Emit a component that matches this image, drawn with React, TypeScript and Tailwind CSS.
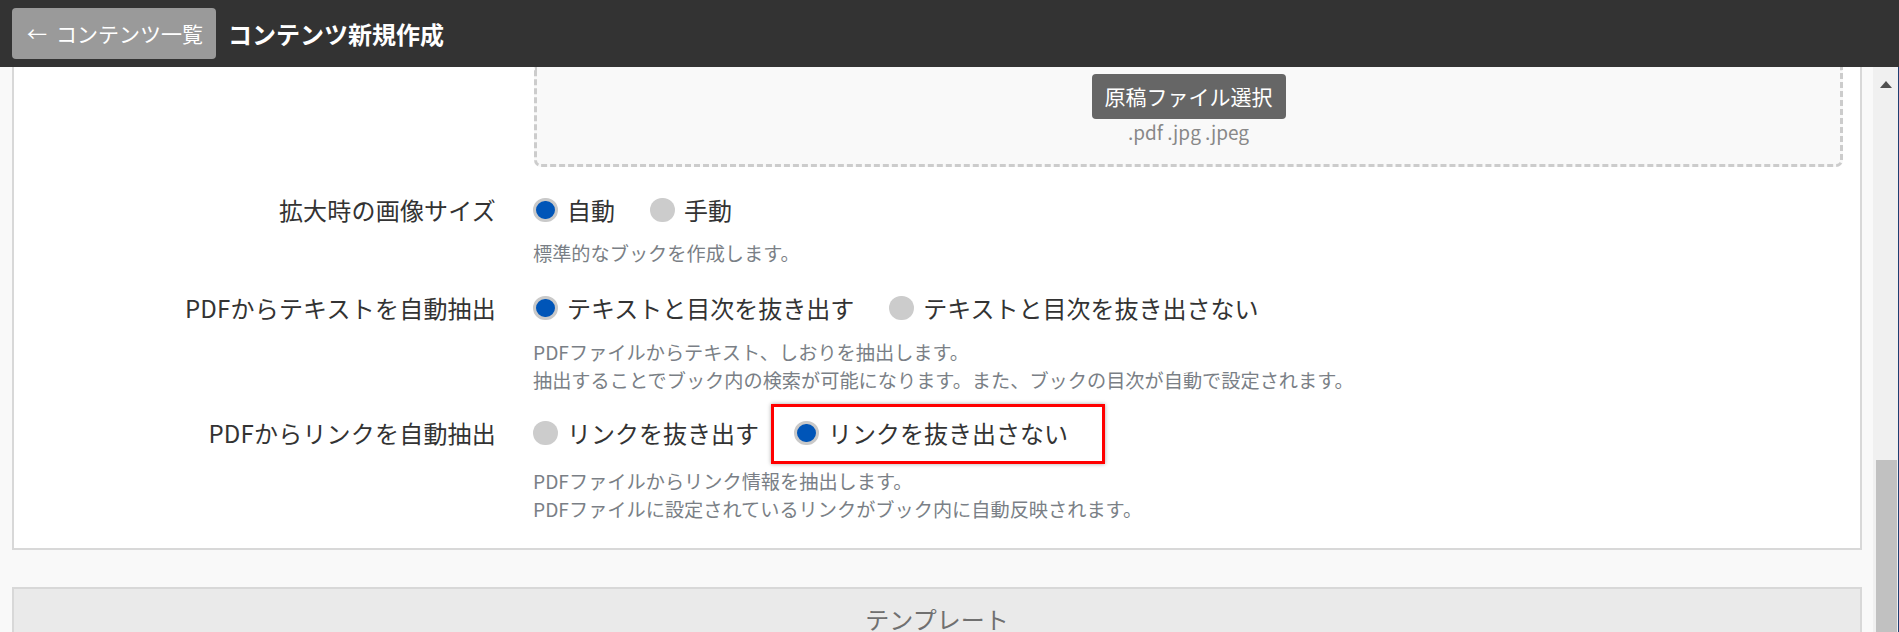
import React from "react";

type Opt = { label: string; checked: boolean; highlight?: boolean };

function Radio({ checked }: { checked: boolean }) {
  return checked ? (
    <span className="inline-block w-[25px] h-[24px] rounded-full bg-[#0055b8] border-[3px] border-[#c9c9c9] shrink-0" />
  ) : (
    <span className="inline-block w-[25px] h-[24px] rounded-full bg-[#cccccc] shrink-0" />
  );
}

function Field({
  label,
  options,
  help,
  className,
  helpClass,
}: {
  label: string;
  options: Opt[];
  help: string[];
  className: string;
  helpClass: string;
}) {
  return (
    <div className={"grid grid-cols-[482px_1fr] gap-x-[37px] " + className}>
      <div className="text-right text-[24px] leading-[36px] text-[#333333] tracking-[0.2px]">{label}</div>
      <div>
        <div className="flex items-center h-[36px]">
          {options.map((o) => (
            <label key={o.label} className="relative flex items-center mr-[35px]">
              {o.highlight && (
                <span className="absolute left-[-23px] top-[-11px] w-[334px] h-[60px] border-[3px] border-[#ff0000] shadow-[0_0_4px_rgba(0,0,0,0.35)] pointer-events-none" />
              )}
              <Radio checked={o.checked} />
              <span className="ml-[9px] text-[24px] leading-[36px] text-[#333333]">{o.label}</span>
            </label>
          ))}
        </div>
        <div className={"text-[19.2px] leading-[28px] text-[#7a7f86] " + helpClass}>
          {help.map((h) => (
            <div key={h}>{h}</div>
          ))}
        </div>
      </div>
    </div>
  );
}

export default function App() {
  return (
    <div
      className="w-[1899px] h-[632px] overflow-hidden flex flex-col bg-[#f9f9f9]"
      style={{ fontFamily: '"Noto Sans CJK JP", "Noto Sans", sans-serif' }}
    >
      <header className="h-[67px] shrink-0 bg-[#333333] flex items-center pl-[12px]">
        <button className="w-[204px] h-[51px] rounded-[4px] bg-[#9a9a9a] text-white text-[21px] flex items-center pl-[15px]">
          <span className="text-[20px]">←</span>
          <span className="ml-[9px]">コンテンツ一覧</span>
        </button>
        <h1 className="ml-[12px] text-white text-[24px] font-bold leading-none">コンテンツ新規作成</h1>
      </header>
      <div className="flex flex-1 min-h-0">
        <main className="flex-1 min-w-0 overflow-hidden pl-[12px] pr-[11px]">
          <section className="bg-white border-2 border-t-0 border-[#d8d8d8] pr-[17px] pb-[25px]">
            <div className="ml-[520px] h-[100px] border-[3px] border-t-0 border-dashed border-[#cccccc] rounded-b-[7px] bg-[#f9f9f9] flex flex-col items-center pt-[7px]">
              <button className="h-[45px] w-[194px] rounded-[4px] bg-[#666666] text-white text-[21px] leading-none">
                原稿ファイル選択
              </button>
              <div className="mt-[2px] text-[19px] leading-[22px] text-[#888888]">.pdf .jpg .jpeg</div>
            </div>
            <Field
              className="mt-[25px]"
              helpClass="mt-[11px]"
              label="拡大時の画像サイズ"
              options={[
                { label: "自動", checked: true },
                { label: "手動", checked: false },
              ]}
              help={["標準的なブックを作成します。"]}
            />
            <Field
              className="mt-[23px]"
              helpClass="mt-[12px]"
              label="PDFからテキストを自動抽出"
              options={[
                { label: "テキストと目次を抜き出す", checked: true },
                { label: "テキストと目次を抜き出さない", checked: false },
              ]}
              help={[
                "PDFファイルからテキスト、しおりを抽出します。",
                "抽出することでブック内の検索が可能になります。また、ブックの目次が自動で設定されます。",
              ]}
            />
            <Field
              className="mt-[21px]"
              helpClass="mt-[16px]"
              label="PDFからリンクを自動抽出"
              options={[
                { label: "リンクを抜き出す", checked: false },
                { label: "リンクを抜き出さない", checked: true, highlight: true },
              ]}
              help={[
                "PDFファイルからリンク情報を抽出します。",
                "PDFファイルに設定されているリンクがブック内に自動反映されます。",
              ]}
            />
          </section>
          <section className="mt-[37px] h-[120px] bg-[#eaeaea] border-2 border-[#d8d8d8] pt-[17px] text-center text-[24px] leading-[26px] text-[#707070]">
            テンプレート
          </section>
        </main>
        <div className="w-[26px] shrink-0 bg-[#f0f0f0] border-r-[1px] border-[#1f3f73] flex flex-col justify-between pl-[3px]">
          <div className="h-[32px] flex items-center justify-center pr-[2px] pt-[2px]">
            <svg width="12" height="7" viewBox="0 0 12 7">
              <path d="M6 0 L12 7 L0 7 Z" fill="#505050" />
            </svg>
          </div>
          <div className="h-[172px] w-[21px] bg-[#c1c1c1]" />
        </div>
      </div>
    </div>
  );
}
